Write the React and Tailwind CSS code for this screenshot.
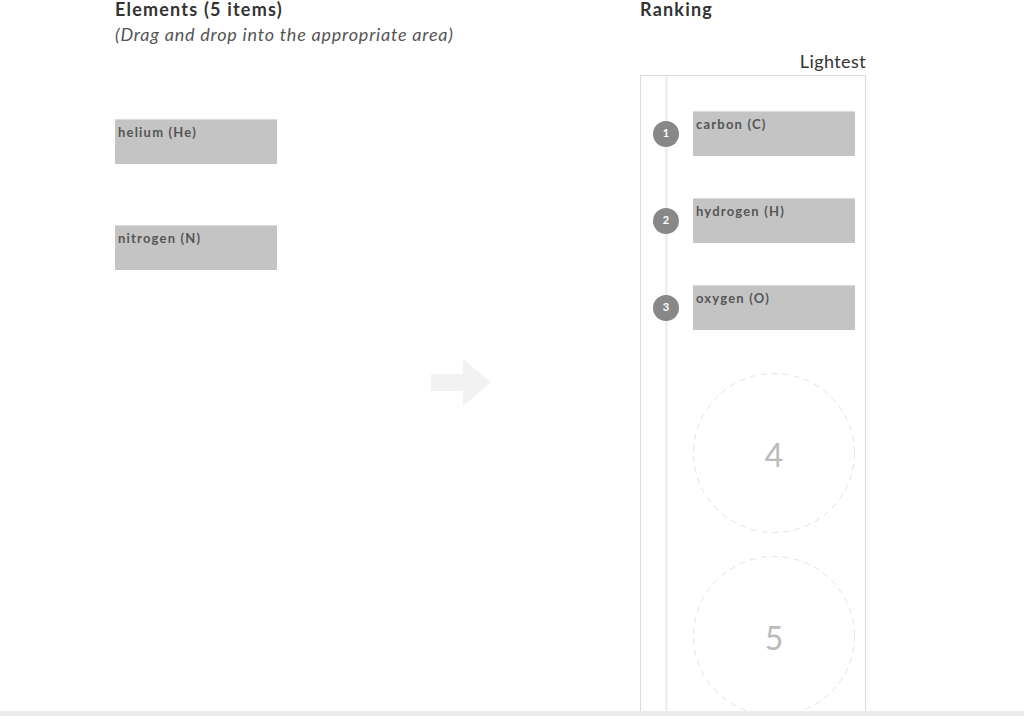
const looseItems = ['helium (He)', 'nitrogen (N)'];
const ranked = ['carbon (C)', 'hydrogen (H)', 'oxygen (O)'];
const emptySlots = [4, 5];

function Chip({ label }) {
  return (
    <div className="w-[162px] h-[45px] bg-[#c4c4c4] border-t border-[#dadada] pl-[3px] pt-[4px] text-[13px] font-bold leading-[16px] tracking-[1.2px] text-[#555]">
      {label}
    </div>
  );
}

export default function App() {
  return (
    <div className="w-[1024px] h-[716px] flex flex-col overflow-hidden bg-white font-['Lato','Open_Sans',sans-serif]">
      <div className="h-[711px] flex overflow-hidden pl-[115px]">
        {/* Left: loose elements */}
        <div className="w-[525px] flex flex-col">
          <div className="text-[18px] font-bold leading-[20px] tracking-[1.2px] text-[#333] -mt-[1px]">Elements (5 items)</div>
          <div className="text-[18px] italic leading-[20px] tracking-[0.78px] text-[#555] mt-[5px]">(Drag and drop into the appropriate area)</div>
          <div className="flex flex-col gap-[61px] mt-[75px]">
            {looseItems.map((it) => (
              <Chip key={it} label={it} />
            ))}
          </div>
          <div className="ml-[316px] mt-[89px] w-[60px] h-[47px]">
            <svg width="60" height="47" viewBox="0 0 60 47">
              <path d="M0 15 H32 V0 L60 23.5 L32 47 V32 H0 Z" fill="#f2f2f2" />
            </svg>
          </div>
        </div>

        {/* Right: ranking */}
        <div className="w-[226px] flex flex-col">
          <div className="text-[18px] font-bold leading-[20px] tracking-[1.2px] text-[#333] -mt-[1px]">Ranking</div>
          <div className="text-[18px] leading-[20px] tracking-[0.4px] text-[#333] text-right mt-[32px]">Lightest</div>
          <div className="relative mt-[4px] flex-1 border-x border-t border-[#dcdcdc] pt-[35px]">
            <div className="absolute left-[24px] top-0 bottom-0 w-[3px] bg-[#f0f0f0]" />
            <div className="relative flex flex-col gap-[42px]">
              {ranked.map((it, i) => (
                <div key={it} className="flex items-center">
                  <div className="ml-[12px] w-[26px] h-[26px] rounded-full bg-[#888] flex items-center justify-center text-[11px] font-bold text-white">
                    {i + 1}
                  </div>
                  <div className="ml-[14px]">
                    <Chip label={it} />
                  </div>
                </div>
              ))}
            </div>
            <div className="relative flex flex-col gap-[23px] mt-[43px]">
              {emptySlots.map((n) => (
                <div key={n} className="relative ml-[52px] w-[162px] h-[160px] flex items-center justify-center pt-[4px] text-[32px] leading-none text-[#bbb]">
                  <svg className="absolute inset-0" width="162" height="160" viewBox="0 0 162 160">
                    <ellipse cx="81" cy="80" rx="80.5" ry="79.5" fill="none" stroke="#e2e2e2" strokeWidth="1" strokeDasharray="6 5" />
                  </svg>
                  <span className="relative">{n}</span>
                </div>
              ))}
            </div>
          </div>
        </div>
      </div>
      <div className="h-[5px] bg-[#ececec]" />
    </div>
  );
}
